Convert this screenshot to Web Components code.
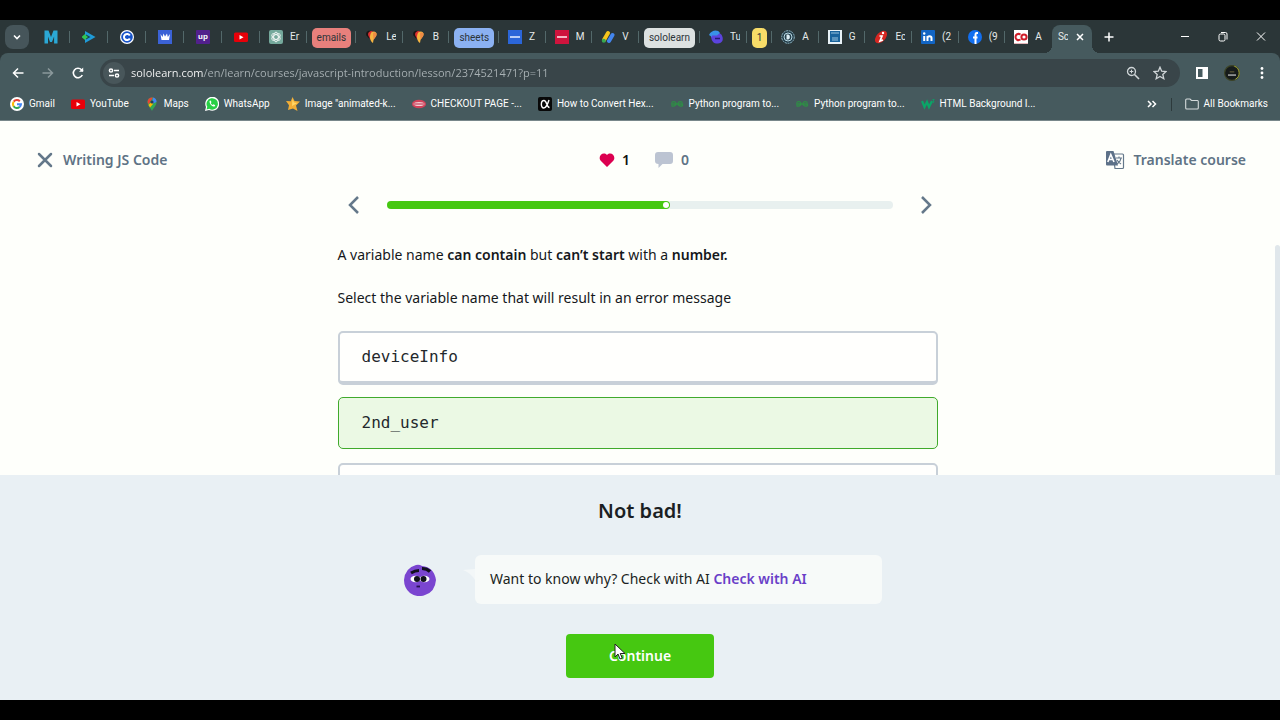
<!DOCTYPE html>
<html lang="en">
<head>
<meta charset="utf-8">
<title>Writing JS Code</title>
<style>
    html, body { height: 100%; }
    body { margin: 0; background: #000; overflow: hidden; }
    b { font-weight: 600; }
</style>
</head>
<body>
<app-window>
    <tab-strip slot="chrome"></tab-strip>
    <address-bar slot="chrome"></address-bar>
    <bookmark-bar slot="chrome"></bookmark-bar>
    <lesson-header></lesson-header>
    <lesson-progress value="56"></lesson-progress>
    <lesson-body>
        <p>A variable name <b>can contain</b> but <b>can’t start</b> with a <b>number.</b></p>
        <p>Select the variable name that will result in an error message</p>
        <answer-option>deviceInfo</answer-option>
        <answer-option correct>2nd_user</answer-option>
        <answer-option></answer-option>
    </lesson-body>
    <result-panel heading="Not bad!">
        Want to know why? Check with AI <a href="#ai">Check with AI</a>
    </result-panel>
</app-window>

<script>
(function () {
    // name -> [viewBox, markup]
    const ICONS = {
        chevron: ["0 0 14 14", `<path d="M4 5.5l3 3 3-3" fill="none" stroke="#fff" stroke-width="1.6"/>`],
        m: ["0 0 14 14", `<path d="M.5 13.500V.5h4L7 7 9.500.5h4v13h-3.400V6.500L8 12H6L4 6.500v7z" fill="#2ba8d6"/>`],
        play: ["0 0 14 14", `<path d="M3 1l10.500 6L3 13z" fill="#1f9bd8"/><path d="M3 4v6L0 7.500V6.500z" fill="#31c653"/><path d="M4 4.500L8.500 7 4 9.500z" fill="#17434f"/><path d="M3 4.500L6 7 3 9.500z" fill="#31c653"/>`],
        coin: ["0 0 14 14", `<circle cx="7" cy="7" r="7" fill="#fff"/><circle cx="7" cy="7" r="5.800" fill="#1652c8"/><path d="M9.800 5.500A3.100 3.100 0 1 0 9.800 8.500" fill="none" stroke="#fff" stroke-width="2"/>`],
        crown: ["0 0 14 14", `<rect width="14" height="14" fill="#3b62d6"/><path d="M2.500 4l2 3 1-3.500L7 6.500 9 3.500l.8 3.500L12 4l-1 6H3.500z" fill="#fff"/>`],
        up: ["0 0 14 14", `<rect width="14" height="14" rx="1" fill="#52208c"/><text x="7" y="9" text-anchor="middle" font-family="Liberation Sans, sans-serif" font-weight="bold" font-size="8" fill="#fff">up</text>`],
        youtube: ["0 0 14 14", `<rect y="2.500" width="14" height="9.500" rx="1.500" fill="#e80009"/><path d="M5.500 5l4 2.200-4 2.300z" fill="#fff"/>`],
        gpt: ["0 0 14 14", `<rect width="14" height="14" rx="2" fill="#75a99c"/><g fill="none" stroke="#fff" stroke-width=".8"><ellipse cx="7" cy="7" rx="2.300" ry="4.800"/><ellipse cx="7" cy="7" rx="2.300" ry="4.800" transform="rotate(60 7 7)"/><ellipse cx="7" cy="7" rx="2.300" ry="4.800" transform="rotate(120 7 7)"/></g>`],
        balloon: ["0 0 14 14", `<path d="M1.500 5.500C0 2 3.500 0 6 1l1 4-3 3.500z" fill="#191414"/><path d="M3.500 6C2 3 4.500.5 7.500 1L8 6l-2.500 3.500z" fill="#d92f2f"/><path d="M5.500 4c1.500-4 7-2.500 6 1-.5 2-2.500 3-3 5L8 13C5 11 4.500 7 5.500 4z" fill="#f6b541"/><path d="M8 3c3-2 4.500 1 3 3.500L8.500 10z" fill="#ef8b44"/>`],
        zoomsite: ["0 0 14 14", `<rect width="14" height="14" fill="#2b66d9"/><path d="M2 7h10" stroke="#dfe9ff" stroke-width="1.600"/>`],
        redsite: ["0 0 14 14", `<rect width="14" height="14" fill="#cf143d"/><path d="M2 7h10" stroke="#ffe1e8" stroke-width="1.600"/>`],
        ads: ["0 0 14 14", `<path d="M3 10l4-7" stroke="#f7c41c" stroke-width="4" stroke-linecap="round"/><path d="M8 11l3.500-6" stroke="#4385ed" stroke-width="4" stroke-linecap="round"/><circle cx="2.800" cy="10.800" r="2" fill="#37a851"/>`],
        mascot: ["0 0 14 14", `<path d="M2 6C3 1 12 1 13.500 7s-4 6.500-6.500 6.500S2 10 2 6z" fill="#5b43dd"/><path d="M0 5c2-5 9-6 11-2L8 5.500H3L3 7z" fill="#3992e8"/><path d="M6 8.500h5" stroke="#211b73" stroke-width="1.500"/>`],
        react: ["0 0 14 14", `<circle cx="7" cy="7" r="6.300" fill="#263f4b" stroke="#8cb3c2" stroke-width="1" stroke-dasharray="2 .7"/><circle cx="7" cy="7" r="4" fill="none" stroke="#b8dae6"/><path d="M5.500 4.500v5h1.500c2.500 0 2.500-5 0-5z" fill="#dceef5"/>`],
        gsheet: ["0 0 14 14", `<rect width="14" height="14" fill="#e8f2f7"/><rect x="2" y="1" width="10" height="11" fill="#19639c"/><path d="M3 3h8M4 8h6M4 10h6" stroke="#b9ddf0" stroke-width=".8"/>`],
        redi: ["0 0 14 14", `<ellipse cx="7" cy="7" rx="4.500" ry="7.500" transform="rotate(42 7 7)" fill="#d62621"/><path d="M5.500 6H8L6 11l3-1" stroke="#fff" stroke-width="1.700" fill="none"/><circle cx="9" cy="3" r="1.200" fill="#fff"/>`],
        linkedin: ["0 0 14 14", `<rect width="14" height="14" rx="1" fill="#1265c4"/><path d="M3.200 6v5M6.500 11V6M6.500 8c0-2.300 4-2.300 4 0v3" stroke="#fff" stroke-width="2" fill="none"/><circle cx="3.200" cy="3.500" r="1.200" fill="#fff"/>`],
        facebook: ["0 0 14 14", `<circle cx="7" cy="7" r="7" fill="#126ff0"/><path d="M10 3H8.800C7.500 3 7.500 4 7.500 5v9M5 7.500h4.500" stroke="#fff" stroke-width="2" fill="none"/>`],
        co: ["0 0 14 14", `<rect width="14" height="14" fill="#fff"/><path d="M6.500 4.500C4 3 1.500 4.500 1.500 7S4 11 6.500 9.500" stroke="#cf1e2b" stroke-width="2" fill="none"/><circle cx="10" cy="7" r="2.600" stroke="#cf1e2b" stroke-width="2" fill="none"/><path d="M0 13.500h14" stroke="#e2b4b7"/>`],
        close: ["0 0 14 14", `<path d="M4 4l6 6M10 4l-6 6" stroke="#fff" stroke-width="1.500"/>`],
        plus: ["0 0 14 14", `<path d="M7 2.500v9M2.500 7h9" stroke="#fff" stroke-width="1.500"/>`],
        min: ["0 0 14 14", `<path d="M3 6.500h8" stroke="#fff"/>`],
        restore: ["0 0 14 14", `<rect x="3" y="4" width="6" height="7" rx="1.500" fill="none" stroke="#fff"/><path d="M5 2.500h4.500q1.500 0 1.500 1.500v5.500" fill="none" stroke="#fff"/>`],
        winclose: ["0 0 14 14", `<path d="M3 2.500l8 8M11 2.500l-8 8" stroke="#fff"/>`],
        back: ["0 0 14 14", `<path d="M12.500 7H3M7 2.500L2.500 7 7 11.500" fill="none" stroke="#fff" stroke-width="1.500"/>`],
        forward: ["0 0 14 14", `<path d="M1.500 7h9.500M7 2.500L11.500 7 7 11.500" fill="none" stroke="#8b999c" stroke-width="1.500"/>`],
        reload: ["0 0 14 14", `<path d="M11.300 9A4.700 4.700 0 1 1 10.500 3.800L12 5" fill="none" stroke="#fff" stroke-width="1.600"/><path d="M12.200 1.500v4.300H8z" fill="#fff"/>`],
        tune: ["0 0 14 14", `<g fill="none" stroke="#fff" stroke-width="1.500"><circle cx="4" cy="4.500" r="1.600"/><path d="M7 4.500h5M2 9.500h5"/><circle cx="10" cy="9.500" r="1.600"/></g>`],
        magnify: ["0 0 14 14", `<circle cx="5.500" cy="5.500" r="4" fill="none" stroke="#d0d6d8" stroke-width="1.300"/><path d="M8.500 8.500L13 13" stroke="#d0d6d8" stroke-width="1.600"/><path d="M5.500 3.700v3.600M3.700 5.500h3.600" stroke="#d0d6d8"/>`],
        star: ["0 0 14 14", `<path d="M7 1.200l1.700 4 4.300.4-3.200 2.800 1 4.300L7 10.400l-3.800 2.300 1-4.300L1 5.600l4.300-.4z" fill="none" stroke="#d0d6d8" stroke-width="1.300"/>`],
        panel: ["0 0 14 14", `<path d="M1 1h12v12H1zM3 3v8h4.500V3z" fill="#fff" fill-rule="evenodd"/>`],
        avatar: ["0 0 14 14", `<circle cx="7" cy="7" r="6.500" fill="#161b1b" stroke="#3c4426"/><path d="M9 1A6.300 6.300 0 0 1 10 12.500" fill="none" stroke="#a9ab35" stroke-width=".8"/><path d="M3.500 8.800h7" stroke="#d4d4d4"/><path d="M5 6h4" stroke="#615a38"/>`],
        dots: ["0 0 14 14", `<g fill="#fff"><circle cx="7" cy="2.500" r="1.400"/><circle cx="7" cy="7" r="1.400"/><circle cx="7" cy="11.500" r="1.400"/></g>`],
        google: ["0 0 14 14", `<circle cx="7" cy="7" r="7" fill="#fff"/><g fill="none" stroke-width="2"><path d="M3.700 4.700A4 4 0 0 1 9.800 4.200" stroke="#e94335"/><path d="M3.700 9.300A4 4 0 0 1 3.700 4.700" stroke="#fabb05"/><path d="M9.600 10A4 4 0 0 1 3.600 9.200" stroke="#34a853"/><path d="M7 7.200h4A4 4 0 0 1 9.500 10" stroke="#4285f4"/></g>`],
        maps: ["0 0 14 14", `<path d="M7 14C6 11 2.500 9 2.500 5a4.500 4.500 0 0 1 9 0c0 4-3.500 6-4.500 9z" fill="#32a753"/><path d="M2.500 5A4.500 4.500 0 0 1 8 .6L3.500 7.500z" fill="#e94335"/><path d="M8 .6A4.500 4.500 0 0 1 11.500 5L7 7z" fill="#4285f4"/><path d="M3.500 8L7 4l1 3-3 3.500z" fill="#fabb05"/><circle cx="7" cy="5" r="1.600" fill="#263c56"/>`],
        whatsapp: ["0 0 14 14", `<path d="M0 14l1-4A7 7 0 1 1 4 13z" fill="#fff"/><path d="M1.500 12.500l.8-2.700A5.700 5.700 0 1 1 4.300 11.800z" fill="#27d045"/><path d="M4.500 4c0 3.500 2.500 5.500 5 5.500l.8-1.200-1.800-1-.9.7C6.500 7.500 6 6.700 5.800 6l.7-.8L5.700 3.500z" fill="#fff"/>`],
        gold: ["0 0 14 14", `<path d="M6.500 0l2 4 5.500.5-4 4 1.500 5.500L7 11.500 2 13l1-4.800L0 4l4.800.3z" fill="#f2ae36"/><path d="M6.500 2l1.500 3.500 3.500.5-5.500 3z" fill="#ffd768"/>`],
        lips: ["0 0 14 14", `<ellipse cx="7" cy="7" rx="7" ry="4.300" fill="#d2425a"/><ellipse cx="7" cy="7" rx="5.500" ry="2" fill="#f3cfd4"/><path d="M2 7h10" stroke="#b92542"/>`],
        alpha: ["0 0 14 14", `<rect width="14" height="14" rx="2" fill="#080808"/><path d="M11 3C9 9 8 11 5.800 11 2.500 11 2.500 3.500 6 3.500c3 0 2.500 7 5.500 7" fill="none" stroke="#fff" stroke-width="1.400"/>`],
        gfg: ["0 0 14 14", `<path d="M1.500 5.500c3.500-2 4.500 0 4.500 1.500S3 10 1.500 8.500M12.500 5.500C9 3.500 8 5.500 8 7s3 3 4.500 1.500V7M1 7h12" fill="none" stroke="#2f8d46" stroke-width="1.300"/>`],
        w3: ["0 0 14 14", `<path d="M1 4l2.500 6L6 5l2 5 3-6" fill="none" stroke="#0aa567" stroke-width="2.200"/><path d="M11.500 2.500h1.700l-1 1.500 1 1-1.500.8" fill="none" stroke="#0aa567" stroke-width=".8"/>`],
        more: ["0 0 14 14", `<path d="M3 4l3 3-3 3M7.500 4l3 3-3 3" fill="none" stroke="#fff" stroke-width="1.500"/>`],
        folder: ["0 0 14 14", `<path d="M.7 3q0-1 1-1H5l1.500 1.500h6q.8 0 .8 1V11q0 1-1 1H1.700q-1 0-1-1z" fill="none" stroke="#d4dadb" stroke-width="1.100"/>`],
        cross: ["0 0 18 18", `<path d="M3 3l12 12M15 3L3 15" stroke="#64788a" stroke-width="2.500" stroke-linecap="round"/>`],
        heart: ["0 0 16 16", `<path d="M8 15L1.500 8.500C-1.500 4.500 4-1 8 3c4-4 9.500 1.500 6.500 5.500z" fill="#dc0050"/>`],
        comment: ["0 0 20 18", `<path d="M4 1h12q3 0 3 3v6q0 3-3 3H8.500l-4 4v-4Q1 13 1 10V4q0-3 3-3z" fill="#bcc4d2"/>`],
        translate: ["0 0 20 20", `<path d="M8 4h9.500q1 0 1 1v12.500q0 1-1 1H10z" fill="#fffffc" stroke="#64788a" stroke-width="1.200"/><path d="M2 1h6.500l4.500 14.500H2q-1 0-1-1V2q0-1 1-1z" fill="#5d7188"/><path d="M2.800 12L5.800 4.500 9 12M4 9.500h4" fill="none" stroke="#fff" stroke-width="1.600"/><path d="M11 8h6M14 6.500V8M16 8c-.5 3-2 5-4 6M12 10c1 2 3 3 4 4" fill="none" stroke="#64788a" stroke-width="1.100"/>`],
        prev: ["0 0 14 20", `<path d="M11 2L3 10l8 8" fill="none" stroke="#64788a" stroke-width="2.500"/>`],
        next: ["0 0 14 20", `<path d="M3 2l8 8-8 8" fill="none" stroke="#64788a" stroke-width="2.500"/>`],
        tutor: ["0 0 32 32", `<path d="M12 1q3-1 6 1 12 1 14 14-1 12-11 15-8 3-15-2-6-5-6-13Q1 4 12 1z" fill="#7a45d0"/><path d="M7 9q4-2.500 8-2.500M18 4.500q5 0 8 3" fill="none" stroke="#12101f" stroke-width="3.200"/><ellipse cx="11.500" cy="15" rx="5" ry="3.200" fill="#fff"/><ellipse cx="20.500" cy="15" rx="5" ry="3.200" fill="#fff"/><circle cx="13" cy="15" r="3" fill="#10101c"/><circle cx="19.500" cy="15" r="3" fill="#10101c"/><path d="M12.500 22.500h3.500" fill="none" stroke="#241150" stroke-width="1.800"/>`],
        tail: ["0 0 12 12", `<path d="M0 1l12-1v11Q8 4 0 1z" fill="#f3f7f8"/>`],
        pointer: ["0 0 12 17", `<path d="M1 1v13l3-3 2 5 2.200-1-2-4.500H11z" fill="#fff" stroke="#222" stroke-width="1"/>`]
    };

    function define(name, markup, setup) {
        const template = document.createElement("template");
        template.innerHTML = markup;
        customElements.define(name, class extends HTMLElement {
            constructor() {
                super();
                this.attachShadow({ mode: "open" }).appendChild(template.content.cloneNode(true));
            }

            connectedCallback() {
                if (setup) setup(this, this.shadowRoot);
            }
        });
    }

    function makeIcon(name) {
        const icon = document.createElement("ui-icon");
        icon.setAttribute("name", name);
        return icon;
    }

    define("ui-icon", `
        <style>
            :host { display: block; flex: none; width: var(--icon-width, 14px); height: var(--icon-height, 14px); }
            svg { display: block; width: 100%; height: 100%; }
        </style>
        <svg aria-hidden="true"></svg>
    `, (host, root) => {
        const [box, shape] = ICONS[host.getAttribute("name")];
        const svg = root.querySelector("svg");
        svg.setAttribute("viewBox", box);
        svg.innerHTML = shape;
    });

    define("app-window", `
        <style>
            :host {
                --chrome: #465a5e;
                --strip: #2b3638;
                --field: #394549;
                --slate: #5f7385;
                --green: #46c811;
                display: flex; flex-direction: column; box-sizing: border-box;
                height: 100vh; padding: 20px 0;
                font-family: "Noto Sans", sans-serif;
            }
            header { background: var(--strip); border-bottom: 1px solid #78878a; color: #fff; font-family: Roboto, sans-serif; font-size: 10px; line-height: 14px; }
            main { flex: 1; min-height: 0; display: flex; flex-direction: column; background: #fefffb; }
        </style>
        <header><slot name="chrome"></slot></header>
        <main><slot></slot></main>
    `);

    define("browser-tab", `
        <style>
            :host { display: block; flex: 1; min-width: 0; align-self: stretch; position: relative; }
            :host([pinned]) { flex: 0 0 38px; }
            :host([active]) { flex: 0 0 40px; }
            button { display: flex; align-items: center; gap: 7px; width: 100%; height: 100%; padding: 0 0 0 9px; border: 0; background: none; color: #e6eaea; font: inherit; }
            :host([pinned]) button { padding: 0; justify-content: center; }
            span { width: 10px; overflow: hidden; text-align: left; }
            :host([pinned]) span { display: none; }
            :host([divider])::after { content: ""; position: absolute; right: 0; top: 11px; width: 1px; height: 12px; background: #53686a; }
            :host([active]) button { height: 28px; margin-top: 5px; padding: 0 0 4px 6px; gap: 5px; background: var(--chrome); border-radius: 8px 8px 0 0; }
            :host([active])::before { content: ""; position: absolute; bottom: 0; left: -8px; right: -8px; height: 8px;
                background: radial-gradient(circle at 0 0, transparent 8px, var(--chrome) 8px) left / 8px 8px no-repeat,
                            radial-gradient(circle at 100% 0, transparent 8px, var(--chrome) 8px) right / 8px 8px no-repeat; }
        </style>
        <button type="button"><span><slot></slot></span></button>
    `, (host, root) => {
        const icon = makeIcon(host.getAttribute("icon"));
        const button = root.querySelector("button");
        host.hasAttribute("active") ? button.append(icon) : button.prepend(icon);
        button.setAttribute("aria-label", host.textContent || host.getAttribute("icon"));
    });

    define("tab-group", `
        <style>
            :host { display: flex; align-items: center; align-self: stretch; padding: 0 5px; position: relative; }
            button { height: 20px; margin-top: 3px; padding: 0 5px; border: 0; border-radius: 5px; background: var(--group); color: #2c3438; font: inherit; }
            :host::after { content: ""; position: absolute; right: 0; top: 11px; width: 1px; height: 12px; background: #53686a; }
        </style>
        <button type="button"><slot></slot></button>
    `);

    define("tab-strip", `
        <style>
            :host { display: flex; align-items: center; height: 33px; }
            button { display: grid; place-items: center; border: 0; padding: 0; background: none; color: inherit; }
            .search { width: 24px; height: 24px; margin: 0 3px 0 5px; border-radius: 8px; background: #46555a; }
            nav { flex: 1; min-width: 0; display: flex; align-self: stretch; }
            .tools { display: flex; width: 188px; }
            .tools button { flex: 1; }
            .tools .new { flex: 0 0 34px; margin-right: 40px; }
        </style>
        <button class="search" aria-label="Search tabs"><ui-icon name="chevron"></ui-icon></button>
        <nav>
            <browser-tab pinned divider icon="m"></browser-tab>
            <browser-tab pinned divider icon="play"></browser-tab>
            <browser-tab pinned divider icon="coin"></browser-tab>
            <browser-tab pinned divider icon="crown"></browser-tab>
            <browser-tab pinned divider icon="up"></browser-tab>
            <browser-tab pinned divider icon="youtube"></browser-tab>
            <browser-tab divider icon="gpt">Er</browser-tab>
            <tab-group style="--group: #e8807c">emails</tab-group>
            <browser-tab divider icon="balloon">Le</browser-tab>
            <browser-tab divider icon="balloon">B</browser-tab>
            <tab-group style="--group: #8bb1f2">sheets</tab-group>
            <browser-tab divider icon="zoomsite">Z</browser-tab>
            <browser-tab divider icon="redsite">M</browser-tab>
            <browser-tab divider icon="ads">V</browser-tab>
            <tab-group style="--group: #dce1e1">sololearn</tab-group>
            <browser-tab divider icon="mascot">Tu</browser-tab>
            <tab-group style="--group: #f7dc68">1</tab-group>
            <browser-tab divider icon="react">A</browser-tab>
            <browser-tab divider icon="gsheet">G</browser-tab>
            <browser-tab divider icon="redi">Ec</browser-tab>
            <browser-tab divider icon="linkedin">(2</browser-tab>
            <browser-tab divider icon="facebook">(9</browser-tab>
            <browser-tab icon="co">A</browser-tab>
            <browser-tab active icon="close">Sc</browser-tab>
        </nav>
        <div class="tools">
            <button class="new" aria-label="New tab"><ui-icon name="plus"></ui-icon></button>
            <button aria-label="Minimize"><ui-icon name="min"></ui-icon></button>
            <button aria-label="Restore"><ui-icon name="restore"></ui-icon></button>
            <button aria-label="Close"><ui-icon name="winclose"></ui-icon></button>
        </div>
    `);

    define("address-bar", `
        <style>
            :host { display: flex; align-items: center; height: 39px; padding: 0 3px; background: var(--chrome); border-radius: 8px 8px 0 0; }
            button { display: grid; place-items: center; width: 30px; height: 28px; padding: 0; border: 0; background: none; flex: none; }
            form { flex: 1; min-width: 0; display: flex; align-items: center; height: 28px; margin: 0 7px; padding: 0 7px 0 3px; border-radius: 14px; background: var(--field); }
            form button { width: 27px; }
            form .site { width: 22px; height: 22px; margin-right: 6px; border-radius: 50%; background: #48565a; }
            input {
                flex: 1; min-width: 0; border: 0; padding: 0; outline: 0;
                font-family: "Open Sans", sans-serif; font-size: 11px; line-height: 20px;
                /* host name in white, the path dimmed */
                background: linear-gradient(90deg, #fff var(--host-width, 73px), #a9b2b5 var(--host-width, 73px));
                -webkit-background-clip: text; background-clip: text; color: transparent;
            }
        </style>
        <button aria-label="Back"><ui-icon name="back"></ui-icon></button>
        <button aria-label="Forward"><ui-icon name="forward"></ui-icon></button>
        <button aria-label="Reload"><ui-icon name="reload"></ui-icon></button>
        <form>
            <button class="site" type="button" aria-label="Site information"><ui-icon name="tune"></ui-icon></button>
            <input type="text" aria-label="Address" value="sololearn.com/en/learn/courses/javascript-introduction/lesson/2374521471?p=11">
            <button type="button" aria-label="Zoom"><ui-icon name="magnify"></ui-icon></button>
            <button type="button" aria-label="Bookmark"><ui-icon name="star"></ui-icon></button>
        </form>
        <button aria-label="Side panel"><ui-icon name="panel"></ui-icon></button>
        <button aria-label="Profile"><ui-icon name="avatar" style="--icon-width: 16px; --icon-height: 16px"></ui-icon></button>
        <button aria-label="Menu"><ui-icon name="dots"></ui-icon></button>
    `);

    define("bookmark-link", `
        <style>
            :host { display: block; flex: none; }
            a { display: flex; align-items: center; gap: 5px; color: #fff; text-decoration: none; white-space: nowrap; }
        </style>
        <a href="#"><span><slot></slot></span></a>
    `, (host, root) => {
        root.querySelector("a").prepend(makeIcon(host.getAttribute("icon")));
    });

    define("bookmark-bar", `
        <style>
            :host { display: flex; align-items: center; height: 28px; padding: 0 12px 4px 10px; box-sizing: border-box; background: var(--chrome); }
            nav { flex: 1; min-width: 0; display: flex; gap: 16px; overflow: hidden; }
            button { padding: 0; border: 0; background: none; }
            i { width: 1px; height: 13px; margin: 0 13px 0 12px; background: #2d3a3c; }
        </style>
        <nav>
            <bookmark-link icon="google">Gmail</bookmark-link>
            <bookmark-link icon="youtube">YouTube</bookmark-link>
            <bookmark-link icon="maps">Maps</bookmark-link>
            <bookmark-link icon="whatsapp">WhatsApp</bookmark-link>
            <bookmark-link icon="gold">Image "animated-k...</bookmark-link>
            <bookmark-link icon="lips">CHECKOUT PAGE -...</bookmark-link>
            <bookmark-link icon="alpha">How to Convert Hex...</bookmark-link>
            <bookmark-link icon="gfg">Python program to...</bookmark-link>
            <bookmark-link icon="gfg">Python program to...</bookmark-link>
            <bookmark-link icon="w3">HTML Background I...</bookmark-link>
        </nav>
        <button aria-label="More bookmarks"><ui-icon name="more"></ui-icon></button>
        <i></i>
        <bookmark-link icon="folder">All Bookmarks</bookmark-link>
    `);

    define("lesson-header", `
        <style>
            :host { display: grid; grid-template-columns: 1fr auto 1fr; align-items: center; padding: 27px 34px 0 36px; color: var(--slate); font-size: 14px; font-weight: 600; line-height: 24px; }
            button { display: flex; align-items: center; gap: 8px; padding: 0; border: 0; background: none; color: inherit; font: inherit; }
            .stats { display: flex; gap: 24px; padding-left: 6px; }
            .stats span, .stats button { display: flex; align-items: center; gap: 7px; }
            .lives { color: #111; }
            .translate { justify-self: end; }
            .close { gap: 9px; }
        </style>
        <button class="close"><ui-icon name="cross" style="--icon-width: 18px; --icon-height: 18px"></ui-icon>Writing JS Code</button>
        <div class="stats">
            <span class="lives"><ui-icon name="heart" style="--icon-width: 16px; --icon-height: 16px"></ui-icon>1</span>
            <button><ui-icon name="comment" style="--icon-width: 20px; --icon-height: 18px"></ui-icon>0</button>
        </div>
        <button class="translate"><ui-icon name="translate" style="--icon-width: 20px; --icon-height: 20px"></ui-icon>Translate course</button>
    `);

    define("lesson-progress", `
        <style>
            :host { display: flex; align-items: center; justify-content: center; gap: 26px; padding: 23px 24px 0; }
            button { padding: 0; border: 0; background: none; }
            .track { flex: 0 1 506px; height: 8px; border-radius: 4px; background: #e8f0ef; }
            .bar { display: flex; align-items: center; justify-content: flex-end; height: 8px; border-radius: 4px; background: var(--green); }
            .bar::after { content: ""; width: 6px; height: 6px; margin-right: 1px; border-radius: 50%; background: #fff; }
        </style>
        <button aria-label="Previous"><ui-icon name="prev" style="--icon-height: 20px"></ui-icon></button>
        <div class="track" role="progressbar" aria-label="Lesson progress"><div class="bar"></div></div>
        <button aria-label="Next"><ui-icon name="next" style="--icon-height: 20px"></ui-icon></button>
    `, (host, root) => {
        root.querySelector(".bar").style.width = host.getAttribute("value") + "%";
        root.querySelector(".track").setAttribute("aria-valuenow", host.getAttribute("value"));
    });

    define("lesson-body", `
        <style>
            :host { display: flex; flex: 1; min-height: 0; overflow: hidden; padding-top: 28px; color: #15181b; }
            section { flex: 1; min-width: 0; }
            div { display: flex; flex-direction: column; max-width: 600px; margin: 0 auto; font-size: 14px; line-height: 24px; }
            ::slotted(p) { margin: 0 0 19px; }
            ::slotted(p:last-of-type) { margin-bottom: 21px; }
            i { width: 5px; margin-top: 2px; border-radius: 3px 3px 0 0; background: #e0e7eb; }
        </style>
        <section><div><slot></slot></div></section>
        <i></i>
    `);

    define("answer-option", `
        <style>
            :host { display: block; margin-bottom: 12px; }
            button {
                display: block; width: 100%; height: 54px; padding: 0 22px; box-sizing: border-box; text-align: left;
                border: 2px solid #c8d0d8; border-bottom-width: 4px; border-radius: 5px; background: #fffffd; color: #23282c;
                font-family: "DejaVu Sans Mono", monospace; font-size: 16px; line-height: 24px;
            }
            :host([correct]) { margin-bottom: 14px; }
            :host([correct]) button { height: 52px; border: 1px solid #40aa2c; padding: 0 23px; background: #ebf9e4; }
        </style>
        <button type="button"><slot></slot></button>
    `);

    define("result-panel", `
        <style>
            :host { display: flex; flex-direction: column; align-items: center; padding: 22px 20px; background: #e9f0f4; color: #1b1f23; }
            h2 { margin: 0 0 30px; font-size: 20px; font-weight: 600; line-height: 28px; }
            .tip { display: flex; align-items: center; width: 100%; max-width: 478px; margin-bottom: 30px; padding-left: 6px; }
            .tail { align-self: flex-start; margin: 14px 0 0 27px; }
            .bubble { flex: 1; padding: 12px 15px 13px; border-radius: 6px; background: #f7faf9; font-size: 14px; line-height: 24px; }
            ::slotted(a) { color: #6a3fc8; font-weight: 600; text-decoration: none; }
            .action { position: relative; }
            button { width: 148px; height: 44px; padding: 0; border: 0; border-radius: 4px; background: var(--green); color: #fff; font: 600 14px/24px "Noto Sans", sans-serif; }
            .pointer { position: absolute; left: 48px; top: 9px; }
        </style>
        <h2></h2>
        <div class="tip">
            <ui-icon name="tutor" style="--icon-width: 32px; --icon-height: 32px"></ui-icon>
            <ui-icon class="tail" name="tail" style="--icon-width: 12px; --icon-height: 12px"></ui-icon>
            <div class="bubble"><slot></slot></div>
        </div>
        <div class="action">
            <button type="button">Continue</button>
            <ui-icon class="pointer" name="pointer" style="--icon-width: 12px; --icon-height: 17px"></ui-icon>
        </div>
    `, (host, root) => {
        root.querySelector("h2").textContent = host.getAttribute("heading");
    });
})();
</script>
</body>
</html>
